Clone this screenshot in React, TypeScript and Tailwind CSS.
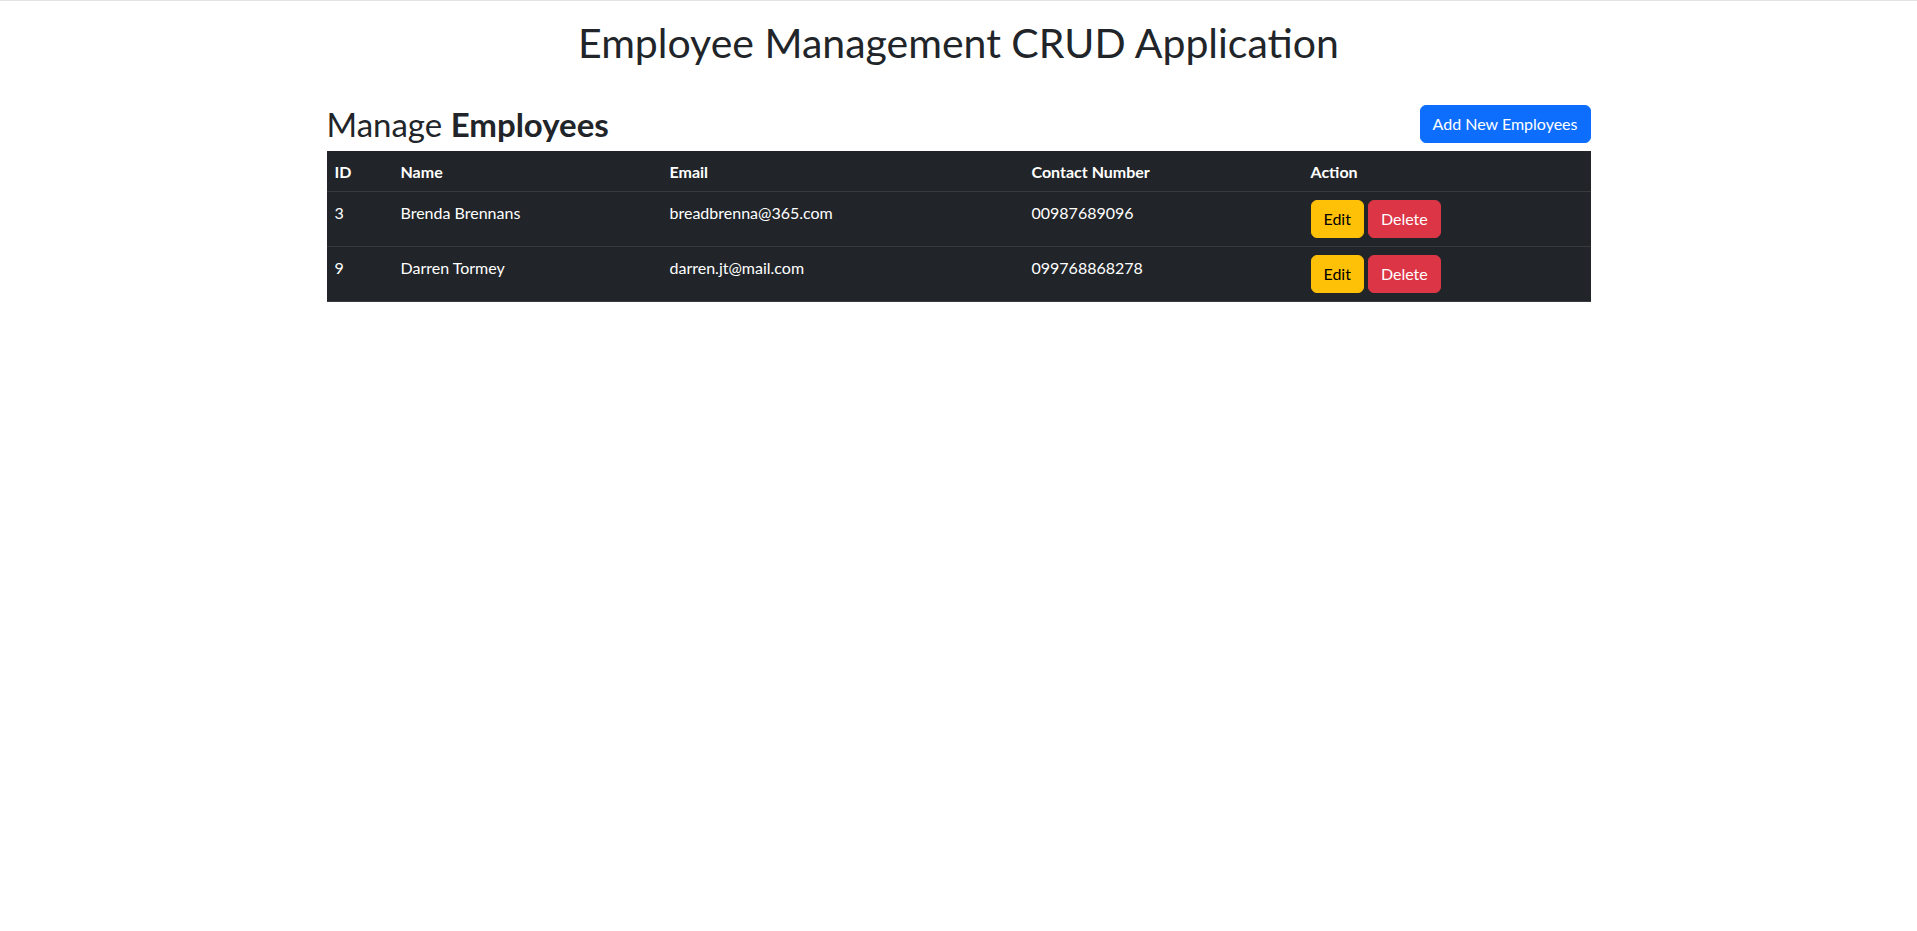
import React from "react";

type Emp = { id: number; name: string; email: string; phone: string };

const employees: Emp[] = [
  { id: 3, name: "Brenda Brennans", email: "breadbrenna@365.com", phone: "00987689096" },
  { id: 9, name: "Darren Tormey", email: "darren.jt@mail.com", phone: "099768868278" },
];

export default function App() {
  return (
    <div className="min-h-[931px] bg-white border-t border-[#e3e3e3] font-['Lato','Liberation_Sans',sans-serif] text-[#212529] text-[16px] leading-[24px]">
      <h1 className="mt-[18px] text-center text-[41px] leading-[48px] font-normal">
        Employee Management CRUD Application
      </h1>
      <div className="w-[1264px] mx-auto mt-[38px]">
        <div className="flex items-center justify-between h-[38px]">
          <h2 className="text-[33px] leading-[38px] font-normal">
            Manage <b className="font-bold">Employees</b>
          </h2>
          <button className="h-[38px] px-3 rounded-[6px] border border-[#0d6efd] bg-[#0d6efd] text-white text-[16px] leading-[24px]">
            Add New Employees
          </button>
        </div>
        <table className="mt-2 w-full table-fixed border-collapse bg-[#212529] text-white text-left align-top">
          <colgroup>
            <col className="w-[66px]" />
            <col className="w-[269px]" />
            <col className="w-[362px]" />
            <col className="w-[279px]" />
            <col className="w-[288px]" />
          </colgroup>
          <thead>
            <tr className="border-b border-[#373b3e]">
              <th className="px-2 pt-[9px] pb-[7px] font-bold align-top">ID</th>
              <th className="px-2 pt-[9px] pb-[7px] font-bold align-top">Name</th>
              <th className="px-2 pt-[9px] pb-[7px] font-bold align-top">Email</th>
              <th className="px-2 pt-[9px] pb-[7px] font-bold align-top">Contact Number</th>
              <th className="px-2 pt-[9px] pb-[7px] font-bold align-top">Action</th>
            </tr>
          </thead>
          <tbody>
            {employees.map((e) => (
              <tr key={e.id} className="border-b border-[#373b3e]">
                <td className="px-2 pt-[9px] pb-[7px] align-top">{e.id}</td>
                <td className="px-2 pt-[9px] pb-[7px] align-top">{e.name}</td>
                <td className="px-2 pt-[9px] pb-[7px] align-top">{e.email}</td>
                <td className="px-2 pt-[9px] pb-[7px] align-top">{e.phone}</td>
                <td className="p-2 align-top">
                  <div className="flex gap-1">
                    <button className="h-[38px] px-3 rounded-[6px] border border-[#ffc107] bg-[#ffc107] text-black">
                      Edit
                    </button>
                    <button className="h-[38px] px-3 rounded-[6px] border border-[#dc3545] bg-[#dc3545] text-white">
                      Delete
                    </button>
                  </div>
                </td>
              </tr>
            ))}
          </tbody>
        </table>
      </div>
    </div>
  );
}
